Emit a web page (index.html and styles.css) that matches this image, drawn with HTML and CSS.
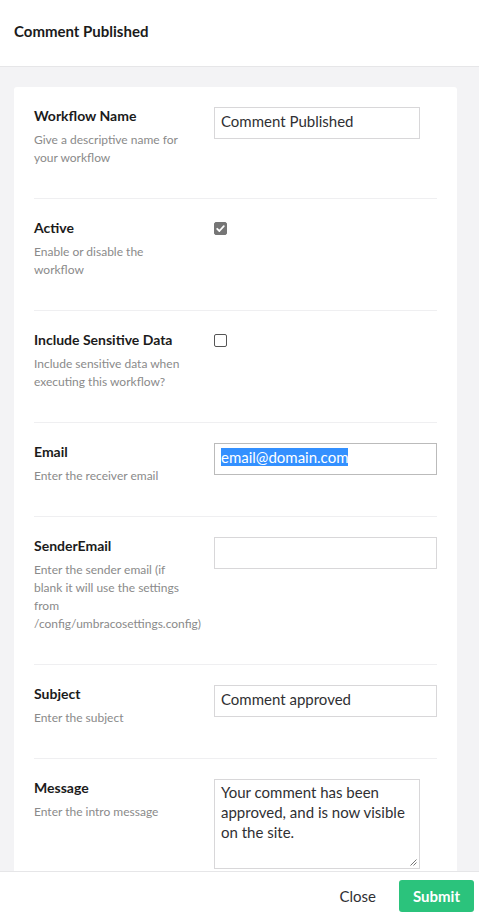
FILE: index.html
```html
<!DOCTYPE html>
<html>
<head>
<meta charset="utf-8">
<link rel="stylesheet" href="styles.css">
</head>
<body>
<div class="app">
  <header class="top">
    <h1 class="title">Comment Published</h1>
  </header>
  <main class="main">
    <div class="card">
      <div class="row">
        <div class="lbl">
          <div class="name">Workflow Name</div>
          <div class="desc">Give a descriptive name for your workflow</div>
        </div>
        <div class="field"><div class="input short">Comment Published</div></div>
      </div>
      <div class="row">
        <div class="lbl">
          <div class="name">Active</div>
          <div class="desc">Enable or disable the workflow</div>
        </div>
        <div class="field"><span class="cb checked"><svg viewBox="0 0 13 13" width="13" height="13"><path d="M3.2 6.8 L5.4 9 L9.8 4.2" fill="none" stroke="#fff" stroke-width="1.8" stroke-linecap="round" stroke-linejoin="round"/></svg></span></div>
      </div>
      <div class="row">
        <div class="lbl">
          <div class="name">Include Sensitive Data</div>
          <div class="desc">Include sensitive data when executing this workflow?</div>
        </div>
        <div class="field"><span class="cb"></span></div>
      </div>
      <div class="row">
        <div class="lbl">
          <div class="name">Email</div>
          <div class="desc">Enter the receiver email</div>
        </div>
        <div class="field"><div class="input wide focus"><span class="sel">email@domain.com</span></div></div>
      </div>
      <div class="row">
        <div class="lbl">
          <div class="name">SenderEmail</div>
          <div class="desc">Enter the sender email (if blank it will use the settings from /config/umbracosettings.config)</div>
        </div>
        <div class="field"><div class="input wide"></div></div>
      </div>
      <div class="row">
        <div class="lbl">
          <div class="name">Subject</div>
          <div class="desc">Enter the subject</div>
        </div>
        <div class="field"><div class="input wide">Comment approved</div></div>
      </div>
      <div class="row last">
        <div class="lbl">
          <div class="name">Message</div>
          <div class="desc">Enter the intro message</div>
        </div>
        <div class="field"><div class="textarea">Your comment has been approved, and is now visible on the site.<svg class="grip" viewBox="0 0 8 8" width="8" height="8"><path d="M7.5 1.5 L1.5 7.5 M7.5 4.5 L4.5 7.5" stroke="#777" stroke-width="1"/></svg></div></div>
      </div>
    </div>
  </main>
  <footer class="foot">
    <span class="close">Close</span>
    <span class="submit">Submit</span>
  </footer>
</div>
</body>
</html>
```
FILE: styles.css
```css
html, body {
  margin: 0;
  padding: 0;
  height: 100%;
}
body {
  font-family: Lato, "Open Sans", sans-serif;
  color: #1b1b1b;
  background: #fff;
}
.app {
  height: 919px;
  display: flex;
  flex-direction: column;
  overflow: hidden;
}
.top {
  flex: none;
  display: flex;
  align-items: center;
  padding: 0 14px;
  border-bottom: 1px solid #e6e6e8;
  box-sizing: border-box;
  height: 67px;
}
.title {
  margin: 0;
  font-size: 15px;
  font-weight: 700;
  color: #1b1b1b;
  position: relative;
  top: -2px;
}
.main {
  flex: 1;
  overflow: hidden;
  background: #f3f3f5;
  padding: 20px 22px 0 14px;
}
.card {
  background: #fff;
  border-radius: 3px;
  padding: 0 20px;
}
.row {
  display: flex;
  padding: 19px 0 31px;
  border-bottom: 1px solid #efeff1;
}
.row.last { border-bottom: none; }
.lbl {
  width: 180px;
  flex: none;
  box-sizing: border-box;
}
.name {
  font-size: 14px;
  font-weight: 700;
  line-height: 20px;
  color: #1b1b1b;
  margin-bottom: 5px;
}
.desc {
  font-size: 12px;
  line-height: 18px;
  color: #8a8a8a;
  max-width: 152px;
}
.field {
  flex: 1;
  padding-top: 1px;
}
.input {
  height: 32px;
  box-sizing: border-box;
  border: 1px solid #d8d7d9;
  padding: 0 6px;
  font-size: 15px;
  line-height: 27px;
  color: #303033;
}
.input.short { width: 206px; }
.input.wide { width: 100%; }
.input.focus { border-color: #bbbbbb; }
.sel {
  background: #3390ff;
  color: #fff;
}
.cb {
  display: inline-block;
  width: 13px;
  height: 13px;
  box-sizing: border-box;
  border: 1px solid #555;
  border-radius: 2px;
  margin-top: 3px;
  vertical-align: top;
}
.cb.checked {
  background: #767676;
  border-color: #767676;
}
.cb svg { display: block; margin: -1px; }
.textarea {
  position: relative;
  width: 206px;
  height: 90px;
  box-sizing: border-box;
  border: 1px solid #d8d7d9;
  padding: 2px 6px;
  font-size: 15px;
  line-height: 20px;
  color: #303033;
}
.grip {
  position: absolute;
  right: 2px;
  bottom: 2px;
}
.foot {
  flex: none;
  height: 48px;
  box-sizing: border-box;
  border-top: 1px solid #e6e6e8;
  background: #fff;
  display: flex;
  align-items: center;
  justify-content: flex-end;
  padding: 0 5px 0 0;
  gap: 23px;
}
.close {
  font-size: 15px;
  color: #303033;
}
.submit {
  background: #2bc37c;
  color: #fff;
  font-weight: 700;
  font-size: 15px;
  height: 32px;
  line-height: 32px;
  padding: 0 14px;
  border-radius: 3px;
}
```
